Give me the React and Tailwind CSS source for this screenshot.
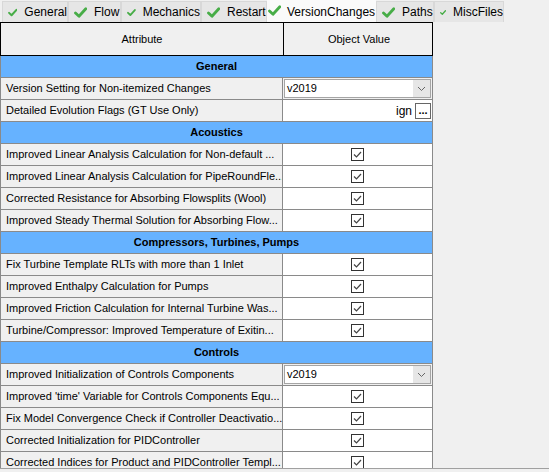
import React from "react";

const font = { fontFamily: "'Liberation Sans', Arial, sans-serif" };

const tabs = [
  { name: "General", w: 66 },
  { name: "Flow", w: 53 },
  { name: "Mechanics", w: 80 },
  { name: "Restart", w: 66 },
  { name: "VersionChanges", w: 109, active: true },
  { name: "Paths", w: 58 },
  { name: "MiscFiles", w: 70 },
];

const rows = [
  { group: "General" },
  { label: "Version Setting for Non-itemized Changes", type: "combo" },
  { label: "Detailed Evolution Flags (GT Use Only)", type: "dots" },
  { group: "Acoustics" },
  { label: "Improved Linear Analysis Calculation for Non-default ..." },
  { label: "Improved Linear Analysis Calculation for PipeRoundFle..." },
  { label: "Corrected Resistance for Absorbing Flowsplits (Wool)" },
  { label: "Improved Steady Thermal Solution for Absorbing Flow..." },
  { group: "Compressors, Turbines, Pumps" },
  { label: "Fix Turbine Template RLTs with more than 1 Inlet" },
  { label: "Improved Enthalpy Calculation for Pumps" },
  { label: "Improved Friction Calculation for Internal Turbine Was..." },
  { label: "Turbine/Compressor: Improved Temperature of Exitin..." },
  { group: "Controls" },
  { label: "Improved Initialization of Controls Components", type: "combo" },
  { label: "Improved 'time' Variable for Controls Components Equ..." },
  { label: "Fix Model Convergence Check if Controller Deactivatio..." },
  { label: "Corrected Initialization for PIDController" },
  { label: "Corrected Indices for Product and PIDController Templ..." },
];

function Check({ className }) {
  return (
    <svg width="13" height="11" viewBox="0 0 13 11" className={className}>
      <path d="M1.5 6 L5 9.3 L11.8 1.8" fill="none" stroke="#47ad47" strokeWidth="2.8" strokeLinecap="round" strokeLinejoin="round" />
    </svg>
  );
}

function Box() {
  return (
    <div className="w-[13px] h-[13px] border border-[#333] bg-white flex items-center justify-center">
      <svg width="11" height="11" viewBox="0 0 11 11">
        <path d="M2 5.5 L4.5 8 L9 3" fill="none" stroke="#444" strokeWidth="1.2" />
      </svg>
    </div>
  );
}

function Value({ type }) {
  if (type === "combo") {
    return (
      <div className="w-full h-full p-[1px]">
        <div className="h-full border border-[#a5a5a5] flex bg-white">
          <div className="flex-1 flex items-center pl-[2px] text-black">v2019</div>
          <div className="w-[17px] bg-[#e6e6e6] flex items-center justify-center">
            <svg width="9" height="6" viewBox="0 0 9 6">
              <path d="M1 1 L4.5 4.5 L8 1" fill="none" stroke="#666" strokeWidth="1" />
            </svg>
          </div>
        </div>
      </div>
    );
  }
  if (type === "dots") {
    return (
      <div className="w-full h-full flex items-center justify-end gap-[3px] pr-[1px] bg-white">
        <span className="text-[12px] text-black">ign</span>
        <div className="w-[16px] h-[16px] border border-[#666] bg-white flex items-end justify-center pb-[2px] text-[11px] font-bold leading-none">...</div>
      </div>
    );
  }
  return (
    <div className="w-full h-full flex items-center justify-center bg-white">
      <Box />
    </div>
  );
}

export default function App() {
  return (
    <div className="w-[549px] h-[472px] bg-[#f0f0f0] overflow-hidden flex flex-col text-[11px] text-black" style={font}>
      <div className="h-[22px] flex items-end pl-[2px] shrink-0">
        {tabs.map((t) =>
          t.active ? (
            <div key={t.name} style={{ width: t.w }} className="h-[22px] bg-[#fafafa] flex items-start pt-[3px] pl-[1px] gap-[6px] text-[12px]">
              <Check className="mt-[2px]" />
              <span>{t.name}</span>
            </div>
          ) : (
            <div key={t.name} style={{ width: t.w }} className="h-[21px] bg-[#e6e6e6] border border-b-0 border-[#d8d8d8] flex items-center pl-[5px] gap-[7px] text-[12px]">
              <Check />
              <span>{t.name}</span>
            </div>
          )
        )}
      </div>
      <div className="h-[446px] w-[433px] overflow-hidden shrink-0">
        <div className="h-[34px] grid grid-cols-[283px_150px] border border-black bg-[#f0f0f0]">
          <div className="flex items-center justify-center border-r border-black">Attribute</div>
          <div className="flex items-center justify-center">Object Value</div>
        </div>
        {rows.map((r, i) =>
          r.group ? (
            <div key={i} className="h-[22px] bg-[#66b2ff] border-b border-l border-r border-[#8a8a8a] flex items-center justify-center font-bold">
              {r.group}
            </div>
          ) : (
            <div key={i} className="h-[22px] grid grid-cols-[283px_150px] border-b border-[#8a8a8a]">
              <div className="bg-[#f0f0f0] border-l border-r border-[#8a8a8a] flex items-center pl-[5px] whitespace-nowrap overflow-hidden">
                {r.label}
              </div>
              <div className="border-r border-[#8a8a8a]">
                <Value type={r.type} />
              </div>
            </div>
          )
        )}
      </div>
      <div className="flex-1 border-t border-[#a0a0a0]" />
    </div>
  );
}
